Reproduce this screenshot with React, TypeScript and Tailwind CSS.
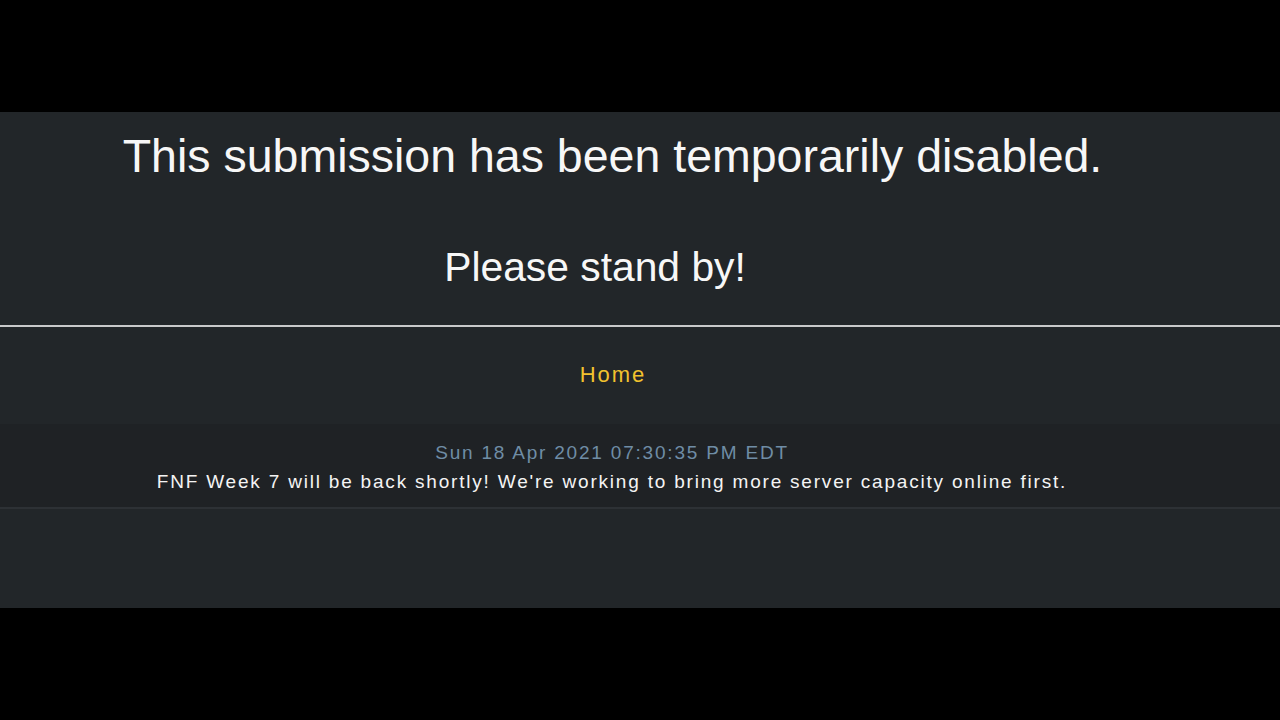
const App = () => {
    return (
        <div className="flex h-[720px] w-[1280px] flex-col bg-black font-['Liberation_Sans',Arial,sans-serif]">
            <div className="h-[112px] shrink-0" />
            <main className="flex h-[496px] shrink-0 flex-col bg-[#222629]">
                <h1 className="pr-[55px] pt-[21px] text-center text-[46.5px] leading-none text-[#f7f7f7]">
                    This submission has been temporarily disabled.
                </h1>
                <h2 className="pr-[90px] pt-[67px] text-center text-[40.8px] leading-none text-[#f7f7f7]">
                    Please stand by!
                </h2>
                <div className="mt-[38px] h-[2px] bg-[#c8c9ca]" />
                <nav className="pr-[54px] pt-[37px] text-center text-[22px] leading-none tracking-[2px] text-[#f2c22e]">
                    Home
                </nav>
                <section className="mt-[38px] flex flex-col items-center border-b-2 border-[#2d3135] bg-[#1f2225] pb-[16px] pr-[56px] pt-[19px] text-[19px] leading-none tracking-[1.8px]">
                    <div className="text-[#6f8da5]">Sun 18 Apr 2021 07:30:35 PM EDT</div>
                    <p className="mt-[10px] text-[#f4f4f4]">
                        FNF Week 7 will be back shortly! We're working to bring more server capacity online first.
                    </p>
                </section>
            </main>
        </div>
    );
};

export default App;
